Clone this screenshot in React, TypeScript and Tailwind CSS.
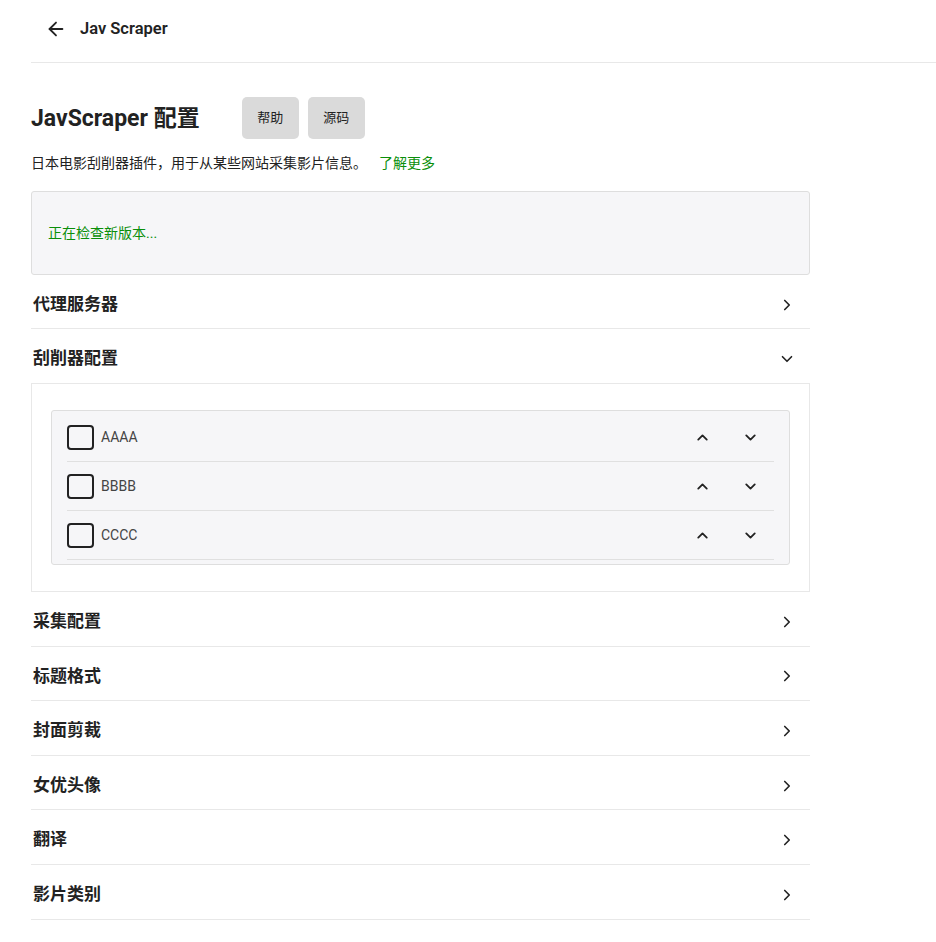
import { ArrowLeft, ChevronRight, ChevronDown, ChevronUp } from 'lucide-react';

const font = { fontFamily: 'Roboto, "Noto Sans CJK SC", "Noto Sans", sans-serif' };

const scrapers = ['AAAA', 'BBBB', 'CCCC'];

const sectionsAfter = ['采集配置', '标题格式', '封面剪裁', '女优头像', '翻译', '影片类别'];

function SectionRow({
  title,
  open = false,
  height = 'h-[54.6px]',
}: {
  title: string;
  open?: boolean;
  height?: string;
}) {
  return (
    <div
      className={
        'flex items-center justify-between pt-[6px] pl-[2px] pr-[14px] ' +
        height +
        (open ? '' : ' border-b border-[#e8e8e8]')
      }
    >
      <span className="text-[17px] font-bold text-[#222]">{title}</span>
      {open ? (
        <ChevronDown className="size-[18px] text-[#222]" strokeWidth={2.2} />
      ) : (
        <ChevronRight className="size-[18px] text-[#222]" strokeWidth={2.2} />
      )}
    </div>
  );
}

export default function App() {
  return (
    <div className="min-h-screen bg-white text-[#222]" style={font}>
      {/* Header */}
      <header className="ml-[31px] h-[63px] flex items-center pb-[4px] border-b border-[#e8e8e8]">
        <button className="ml-[14px] mr-[13px] flex items-center justify-center" aria-label="Back">
          <ArrowLeft className="size-[22px] text-[#222]" strokeWidth={2} />
        </button>
        <span className="text-[16.5px] font-semibold">Jav Scraper</span>
      </header>

      <main className="ml-[31px] w-[779px]">
        {/* Title */}
        <div className="flex items-center mt-[34px]">
          <h1 className="text-[23px] font-bold leading-none">JavScraper 配置</h1>
          <button className="ml-[42px] w-[57px] h-[42px] rounded-[5px] bg-[#dadada] text-[13px] text-[#222]">
            帮助
          </button>
          <button className="ml-[9px] w-[57px] h-[42px] rounded-[5px] bg-[#dadada] text-[13px] text-[#222]">
            源码
          </button>
        </div>

        <p className="mt-[14px] text-[14px] leading-[20px] text-[#222]">
          日本电影刮削器插件，用于从某些网站采集影片信息。
          <a className="ml-[12px] text-[#0a8f0a]">了解更多</a>
        </p>

        {/* Version check */}
        <div className="mt-[18px] h-[84px] rounded-[3px] border border-[#dedede] bg-[#f6f6f8] flex items-center pl-[16px]">
          <span className="text-[14px] text-[#0a8f0a]">正在检查新版本...</span>
        </div>

        <SectionRow title="代理服务器" height="h-[54px]" />
        <SectionRow title="刮削器配置" height="h-[54px]" open />

        {/* Scraper panel */}
        <div className="border border-[#e8e8e8] px-[19px] py-[26px]">
          <div className="rounded-[3px] border border-[#dedede] bg-[#f6f6f8] pl-[15px] pr-[15px] pt-[2px] pb-[4px]">
            {scrapers.map((name) => (
              <div key={name} className="flex items-center h-[49px] border-b border-[#e0e0e0]">
                <span className="w-[27px] h-[25px] rounded-[4px] border-2 border-[#222] bg-transparent" />
                <span className="ml-[7px] text-[14px] text-[#444]">{name}</span>
                <div className="ml-auto flex">
                  <button className="w-12 h-10 flex items-center justify-center" aria-label="Up">
                    <ChevronUp className="size-[17px] text-[#222]" strokeWidth={2.6} />
                  </button>
                  <button className="w-12 h-10 flex items-center justify-center" aria-label="Down">
                    <ChevronDown className="size-[17px] text-[#222]" strokeWidth={2.6} />
                  </button>
                </div>
              </div>
            ))}
          </div>
        </div>

        {sectionsAfter.map((t) => (
          <SectionRow key={t} title={t} />
        ))}
      </main>
    </div>
  );
}
